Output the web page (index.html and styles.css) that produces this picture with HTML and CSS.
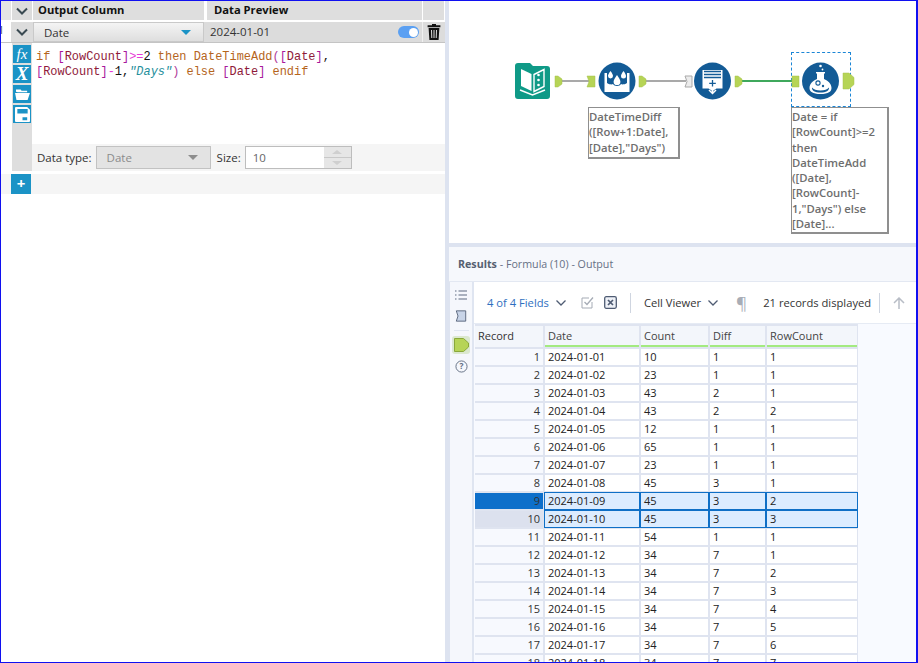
FILE: index.html
```html
<!DOCTYPE html>
<html lang="en">
<head>
<meta charset="utf-8">
<title>Formula tool results</title>
<link rel="stylesheet" href="styles.css">
</head>
<body>
<div class="window">
  <section class="config">
    <div class="head-row">
      <div class="stub"></div>
      <div class="chev-cell"><svg class="chev" viewBox="0 0 12 8"><path d="M1 1.500l5 5 5-5"/></svg></div>
      <div class="head-cell col-output">Output Column</div>
      <div class="head-cell col-preview">Data Preview</div>
      <div class="head-end"></div>
    </div>
    <div class="field-row">
      <div class="stub stub-num"><span>1</span></div>
      <div class="chev-cell"><svg class="chev" viewBox="0 0 12 8"><path d="M1 1.500l5 5 5-5"/></svg></div>
      <div class="select-main"><span>Date</span><i class="caret"></i></div>
      <div class="preview-val">2024-01-01</div>
      <div class="toggle"><i></i></div>
      <div class="trash">
        <svg viewBox="0 0 14 16" width="14" height="16"><path class="trash-fill" d="M5 0h4v1.200h4.400v2H.6v-2H5zM1.600 4h10.800l-.8 12H2.400z"/><path class="trash-line" d="M4.500 6l.3 8M7 6v8M9.500 6l-.3 8"/></svg>
      </div>
    </div>
    <div class="editor">
      <div class="tools">
        <div class="tool fx">fx</div>
        <div class="tool var">X</div>
        <div class="tool"><svg viewBox="0 0 16 14" width="15" height="13"><path fill="#fff" d="M1 4V1.500h5l1 1.500h6v1.500H3zM0 5.500h16L13.500 13H1.500z"/></svg></div>
        <div class="tool"><svg viewBox="0 0 16 16" width="15" height="15"><path fill="#fff" fill-rule="evenodd" d="M1 0h12l3 3v12a1 1 0 0 1-1 1H1a1 1 0 0 1-1-1V1a1 1 0 0 1 1-1zM2.500 2v5h11V2zM8 11v3h5v-3z"/></svg></div>
      </div>
      <div class="editor-main">
        <pre class="code"><span class="k">if</span> <span class="b">[</span><span class="f">RowCount</span><span class="b">]</span><span class="o">&gt;=</span><span class="n">2</span> <span class="k">then</span> <span class="k">DateTimeAdd</span><span class="p">(</span><span class="b">[</span><span class="f">Date</span><span class="b">]</span><span class="n">,</span>
<span class="b">[</span><span class="f">RowCount</span><span class="b">]</span><span class="o">-</span><span class="n">1,</span><span class="s">"Days"</span><span class="p">)</span> <span class="k">else</span> <span class="b">[</span><span class="f">Date</span><span class="b">]</span> <span class="k">endif</span></pre>
        <div class="type-bar">
          <span class="type-label">Data type:</span>
          <div class="type-select"><span>Date</span><i class="caret-gray"></i></div>
          <span class="size-label">Size:</span>
          <div class="size-input">
            <span>10</span>
            <div class="spin"><div class="spin-cell"><i class="up"></i></div><div class="spin-cell"><i class="down"></i></div></div>
          </div>
        </div>
      </div>
    </div>
    <div class="add-row"><div class="add-btn">+</div></div>
  </section>

  <div class="split-v"></div>

  <section class="right">
    <div class="canvas">
      <div class="select-box"></div>
      <svg class="wires" viewBox="0 0 468 243" width="468" height="243">
        <!-- reader -->
        <path fill="#0f9a87" d="M66 66a3 3 0 0 1 3-3h12l3 3h14a3 3 0 0 1 3 3v27a3 3 0 0 1-3 3H69a3 3 0 0 1-3-3z"/>
        <path fill="none" stroke="#fff" stroke-width="1.400" d="M71 90l12.500 5 12.500-5"/>
        <path fill="#fff" d="M72 69l10.500 5v17L72 86z"/>
        <path fill="none" stroke="#fff" stroke-width="1.400" d="M85 74.500l10-5v17l-10 5z"/>
        <g fill="#fff"><circle cx="89.500" cy="75" r="1.300"/><circle cx="89.500" cy="80" r="1.300"/><circle cx="89.500" cy="85" r="1.300"/></g>
        <!-- wires -->
        <path stroke="#a9a9a9" stroke-width="2" d="M112 81h28M197 81h40"/>
        <path stroke="#3fa85c" stroke-width="2" d="M293 81h52"/>
        <!-- anchors -->
        <path class="anchor" d="M106 76h3l4 3v5l-4 3h-3z"/>
        <path class="anchor" d="M138 76h8v11h-8l2-5.500z"/>
        <path class="anchor" d="M190 76h3l4 3v5l-4 3h-3z"/>
        <path class="anchor-off" d="M236 76h7v11h-7l2-5.500z"/>
        <path class="anchor" d="M286 76h3l4 3v5l-4 3h-3z"/>
        <path class="anchor" d="M343 76h7v11h-7z"/>
        <path class="anchor" d="M394 73h6l5 4.500v7l-5 4.500h-6z"/>
        <!-- multi-row formula tool -->
        <circle class="disc" cx="168" cy="81" r="18.500"/>
        <path fill="#fff" d="M155.500 73h2.500v10c3 2 5.500 1.500 6 1 1 2.500 7 2.500 8 0 .5.500 3 1 6-1V73h2.500v19h-25z"/>
        <path fill="#fff" d="M161.500 71c1.700 2.400 2.500 3.700 2.500 4.900a2.500 2.500 0 0 1-5 0c0-1.200.8-2.500 2.500-4.900zM174.500 71c1.700 2.400 2.500 3.700 2.500 4.900a2.500 2.500 0 0 1-5 0c0-1.200.8-2.500 2.500-4.900zM168 75c2.300 3.200 3.400 5 3.400 6.700a3.400 3.400 0 0 1-6.800 0c0-1.700 1.100-3.500 3.400-6.700z"/>
        <!-- sort / record tool -->
        <circle class="disc" cx="263.500" cy="81" r="18.500"/>
        <path fill="#fff" d="M253.500 70h20v18.500h-6l-4 2.500-4-2.500h-6z"/>
        <path stroke="#135b96" stroke-width="1.300" d="M255 71.500h17M255 74.500h17M255 77.500h17M263.500 80v6.500M260.200 83.300h6.600"/>
        <path fill="none" stroke="#fff" stroke-width="1.500" d="M263.500 88v5M260 90l3.500 3.500L267 90"/>
        <!-- formula tool -->
        <circle class="disc" cx="371.500" cy="81" r="18.500"/>
        <path fill="#fff" d="M367 72h9v1.500h-1V79c4 1.500 7.500 5 7.500 9 0 3.500-3 6-11 6s-11-2.500-11-6c0-4 3.500-7.500 7.500-9v-5.500h-1z"/>
        <path fill="#135b96" d="M363 87.500c1.500 2 4.500 3 8.500 3s7-1 8.500-3c.5 3-3 5-8.500 5s-9-2-8.500-5z"/>
        <circle cx="369" cy="83" r="2.100" fill="none" stroke="#135b96" stroke-width="1.100"/>
        <circle cx="374" cy="86" r="1.200" fill="#135b96"/>
        <circle cx="371.500" cy="66" r="1.300" fill="#fff"/><circle cx="373.500" cy="69.500" r=".9" fill="#fff"/>
      </svg>
      <div class="note note-a">DateTimeDiff ([Row+1:Date], [Date],"Days")</div>
      <div class="note note-b">Date = if<br>[RowCount]&gt;=2<br>then<br>DateTimeAdd<br>([Date],<br>[RowCount]-<br>1,"Days") else<br>[Date]...</div>
    </div>

    <div class="split-h"></div>

    <div class="results-title"><b>Results</b> - Formula (10) - Output</div>

    <div class="results-body">
      <div class="rail">
        <svg viewBox="0 0 14 12" width="14" height="12"><path stroke="#5f6b80" stroke-width="1.200" stroke-dasharray="1.500 1" d="M1 2h2M1 6h2M1 10h2"/><path stroke="#5f6b80" stroke-width="1.200" d="M4.500 2H13M4.500 6H13M4.500 10H13"/></svg>
        <svg class="rail-book" viewBox="0 0 12 14" width="12" height="12"><path fill="#c8d4e8" stroke="#4f5c73" d="M.5 1h11v12H.5l2-6z"/></svg>
        <div class="rail-sep"></div>
        <div class="rail-active"><svg viewBox="0 0 15 14" width="15" height="14"><path fill="#b6d456" stroke="#8aa83a" d="M.5.500h9l5 4.500v4l-5 4.500h-9z"/></svg></div>
        <svg viewBox="0 0 14 14" width="13" height="13"><circle cx="7" cy="7" r="6" fill="none" stroke="#5f6b80"/><text x="7" y="10.200" text-anchor="middle" class="q">?</text></svg>
      </div>
      <div class="results-main">
        <div class="toolbar">
          <span class="fields">4 of 4 Fields</span>
          <svg class="tb-chev" viewBox="0 0 10 6" width="10" height="6"><path d="M.5.500L5 5 9.500.500"/></svg>
          <svg class="tb-check" viewBox="0 0 13 13" width="13" height="13"><path fill="none" stroke="#a5abb5" d="M11 6v6H1V2h7"/><path fill="none" stroke="#a5abb5" stroke-width="1.300" d="M3.500 6l2.500 2.500 6-7"/></svg>
          <svg class="tb-x" viewBox="0 0 13 13" width="13" height="13"><rect x=".7" y=".7" width="11.600" height="11.600" rx="1.500" fill="#eef1f7" stroke="#4f5c73" stroke-width="1.300"/><path stroke="#4f5c73" stroke-width="1.700" d="M4 4l5 5M9 4l-5 5"/></svg>
          <i class="tb-sep sep-1"></i>
          <span class="viewer">Cell Viewer</span>
          <svg class="tb-chev" viewBox="0 0 10 6" width="10" height="6"><path d="M.5.500L5 5 9.500.500"/></svg>
          <span class="pilcrow">¶</span>
          <span class="count">21 records displayed</span>
          <i class="tb-sep sep-2"></i>
          <svg class="tb-up" viewBox="0 0 12 12" width="12" height="12"><path fill="none" stroke="#b8bdc6" stroke-width="1.500" d="M6 12V1M1 6l5-5 5 5"/></svg>
        </div>
        <div class="grid" id="grid">
          <div class="th">Record</div><div class="th th-g">Date</div><div class="th th-g">Count</div><div class="th th-g">Diff</div><div class="th th-g">RowCount</div>
          <div class="rec">1</div><div class="td">2024-01-01</div><div class="td">10</div><div class="td">1</div><div class="td">1</div>
          <div class="rec">2</div><div class="td">2024-01-02</div><div class="td">23</div><div class="td">1</div><div class="td">1</div>
          <div class="rec">3</div><div class="td">2024-01-03</div><div class="td">43</div><div class="td">2</div><div class="td">1</div>
          <div class="rec">4</div><div class="td">2024-01-04</div><div class="td">43</div><div class="td">2</div><div class="td">2</div>
          <div class="rec">5</div><div class="td">2024-01-05</div><div class="td">12</div><div class="td">1</div><div class="td">1</div>
          <div class="rec">6</div><div class="td">2024-01-06</div><div class="td">65</div><div class="td">1</div><div class="td">1</div>
          <div class="rec">7</div><div class="td">2024-01-07</div><div class="td">23</div><div class="td">1</div><div class="td">1</div>
          <div class="rec">8</div><div class="td">2024-01-08</div><div class="td">45</div><div class="td">3</div><div class="td">1</div>
          <div class="rec rec-on">9</div><div class="td sel">2024-01-09</div><div class="td sel">45</div><div class="td sel">3</div><div class="td sel">2</div>
          <div class="rec rec-semi">10</div><div class="td sel">2024-01-10</div><div class="td sel">45</div><div class="td sel">3</div><div class="td sel">3</div>
          <div class="rec">11</div><div class="td">2024-01-11</div><div class="td">54</div><div class="td">1</div><div class="td">1</div>
          <div class="rec">12</div><div class="td">2024-01-12</div><div class="td">34</div><div class="td">7</div><div class="td">1</div>
          <div class="rec">13</div><div class="td">2024-01-13</div><div class="td">34</div><div class="td">7</div><div class="td">2</div>
          <div class="rec">14</div><div class="td">2024-01-14</div><div class="td">34</div><div class="td">7</div><div class="td">3</div>
          <div class="rec">15</div><div class="td">2024-01-15</div><div class="td">34</div><div class="td">7</div><div class="td">4</div>
          <div class="rec">16</div><div class="td">2024-01-16</div><div class="td">34</div><div class="td">7</div><div class="td">5</div>
          <div class="rec">17</div><div class="td">2024-01-17</div><div class="td">34</div><div class="td">7</div><div class="td">6</div>
          <div class="rec">18</div><div class="td">2024-01-18</div><div class="td">34</div><div class="td">7</div><div class="td">7</div>
        </div>
      </div>
    </div>
  </section>
</div>
</body>
</html>
```

FILE: styles.css
```css
* { box-sizing: border-box; }
html, body { margin: 0; height: 100%; overflow: hidden; }
body { font-family: "Open Sans", "Noto Sans", sans-serif; font-size: 11px; color: #222; background: #fff; }
.window { width: 918px; height: 663px; display: flex; border: 1px solid #1010f0; border-right-width: 2px; overflow: hidden; }

/* left config */
.config { width: 444px; flex: none; background: #fff; display: flex; flex-direction: column; }
.head-row { display: flex; height: 19px; margin-bottom: 2px; flex: none; }
.stub { width: 10px; background: #e4e4e4; flex: none; }
.stub-num { background: #fff; color: #555; font-size: 11px; line-height: 16px; overflow: hidden; }
.stub-num span { display: block; margin-left: -3px; }
.chev-cell { width: 20px; margin-left: 1px; flex: none; background: #dcdcdc; display: flex; align-items: center; justify-content: center; }
.chev { width: 12px; height: 8px; fill: none; stroke: #3a4a52; stroke-width: 2; }
.head-cell { background: #dedede; font-weight: 700; font-size: 11.200px; line-height: 18px; color: #111; flex: none; }
.col-output { width: 171px; margin-left: 1px; padding-left: 5px; }
.col-preview { width: 215px; margin-left: 3px; padding-left: 7px; }
.head-end { flex: 1; background: #dedede; margin-left: 1px; margin-right: 1px; }
.field-row { display: flex; height: 21px; background: #dcdcdc; border-bottom: 1px solid #c4c4c4; flex: none; }
.select-main { width: 171px; margin-left: 1px; flex: none; border: 1px solid #c9c9c9; background: linear-gradient(#f4f4f4, #dedede); display: flex; align-items: center; justify-content: space-between; padding: 0 12px 0 10px; font-size: 11.500px; color: #333; }
.caret { border: 5px solid transparent; border-top: 5px solid #1b93c6; border-bottom: 0; }
.preview-val { width: 195px; padding-left: 6px; line-height: 20px; font-size: 11.500px; color: #333; flex: none; }
.toggle { width: 21px; height: 12px; margin-top: 4px; background: #5ba0f2; border-radius: 6px; display: flex; justify-content: flex-end; padding: 1.500px; flex: none; margin-left: -1px; }
.toggle i { width: 9px; height: 9px; background: #fff; border-radius: 50%; }
.trash { width: 22px; flex: none; margin-left: 3px; border-left: 1px solid #f0f0f0; display: flex; justify-content: center; align-items: center; }
.trash-fill { fill: #111; }
.trash-line { stroke: #ddd; stroke-width: 1; fill: none; }

.editor { height: 128px; display: flex; flex: none; }
.tools { width: 20px; margin-left: 11px; background: #dedede; flex: none; padding-top: 2px; display: flex; flex-direction: column; align-items: center; gap: 2px; }
.tool { width: 18px; height: 18px; background: #1b93c6; color: #fff; display: flex; align-items: center; justify-content: center; flex: none; }
.tool.fx { font-family: "Liberation Serif", serif; font-style: italic; font-size: 15px; }
.tool.var { font-family: "Liberation Serif", serif; font-style: italic; font-size: 19px; font-weight: 700; }
.editor-main { flex: 1; display: flex; flex-direction: column; }
.code { flex: 1; margin: 0; padding: 7px 0 0 4px; font-family: "Liberation Mono", "DejaVu Sans Mono", monospace; font-size: 11.950px; line-height: 15px; color: #222; }
.k { color: #b5651d; }
.b { color: #a8189c; }
.f { color: #8f1a3a; }
.o { color: #e83ad6; }
.n { color: #111; }
.p { color: #b03a9a; }
.s { color: #1f8f9c; font-style: italic; }
.type-bar { height: 27px; background: #f5f5f5; display: flex; align-items: flex-start; padding: 2px 0 0 5px; flex: none; }
.type-label { font-size: 11.500px; line-height: 24px; color: #333; }
.type-select { width: 115px; height: 23px; margin-left: 4px; background: #e3e3e3; border: 1px solid #c2c2c2; display: flex; align-items: center; justify-content: space-between; padding: 0 12px 0 10px; color: #8b8b8b; font-size: 11.500px; }
.caret-gray { border: 5px solid transparent; border-top: 5px solid #8d8d8d; border-bottom: 0; }
.size-label { margin-left: 6px; font-size: 11.500px; line-height: 24px; color: #333; }
.size-input { width: 107px; height: 23px; margin-left: 4px; background: #fff; border: 1px solid #bdbdbd; display: flex; justify-content: space-between; padding-left: 7px; line-height: 22px; font-size: 11.500px; color: #666; }
.spin { width: 27px; background: #e6e6e6; display: flex; flex-direction: column; }
.spin-cell { flex: 1; display: flex; align-items: center; justify-content: center; }
.spin-cell:first-child { border-bottom: 1px solid #c8c8c8; }
.up { border: 5px solid transparent; border-bottom: 4px solid #cfcfcf; border-top: 0; }
.down { border: 5px solid transparent; border-top: 4px solid #cfcfcf; border-bottom: 0; }
.add-row { margin-top: 3px; height: 20px; background: #f5f5f5; padding-left: 10px; flex: none; }
.add-btn { width: 20px; height: 20px; background: #1b93c6; color: #fff; font-weight: 700; font-size: 15px; line-height: 19px; text-align: center; }

.split-v { width: 4px; background: #dde3f0; flex: none; }

/* right */
.right { flex: 1; min-width: 0; display: flex; flex-direction: column; }
.canvas { position: relative; height: 242px; background: #fff; flex: none; }
.wires { position: absolute; left: 0; top: -1px; }
.anchor { fill: #b6d456; stroke: #a4c04c; stroke-width: .5; }
.anchor-off { fill: #ececec; stroke: #a9a9a9; }
.disc { fill: #135b96; }
.select-box { position: absolute; left: 342px; top: 51px; width: 60px; height: 55px; border: 1px dashed #1b86d6; }
.note { position: absolute; background: #fff; border: 1px solid #8f8f8f; border-right-width: 2px; border-bottom-width: 2px; color: #6e6e6e; font-size: 11.300px; font-weight: 600; line-height: 15.300px; padding: 1px 0 0 0; }
.note-a { left: 139px; top: 106px; width: 92px; height: 52px; }
.note-b { left: 342px; top: 106px; width: 98px; height: 127px; }
.split-h { height: 4px; background: #dde3f0; flex: none; }
.results-title { height: 35px; background: #f6f8fc; color: #667085; font-size: 10.700px; line-height: 35px; padding-left: 9px; flex: none; border-bottom: 1px solid #e3e8f2; }
.results-title b { font-weight: 700; color: #556070; }
.results-body { flex: 1; min-height: 0; display: flex; background: #f8faff; }
.rail { width: 25px; background: #f5f7fc; border-right: 2px solid #dfe5f1; border-left: 1px solid #dde3f0; display: flex; flex-direction: column; align-items: center; padding-top: 7px; flex: none; }
.rail-book { margin-top: 9px; }
.rail-sep { width: 15px; height: 1px; background: #dfe5f1; margin: 8px 0 5px; }
.rail-active { width: 18px; height: 18px; background: #dbe8cf; border-radius: 3px; display: flex; align-items: center; justify-content: center; margin-bottom: 6px; }
.q { font-size: 9px; fill: #5f6b80; font-weight: 700; }
.results-main { flex: 1; min-width: 0; display: flex; flex-direction: column; }
.toolbar { height: 42px; background: #fff; border-bottom: 1px solid #e6ebf4; display: flex; align-items: center; padding-left: 13px; font-size: 11.200px; color: #333; flex: none; }
.fields { color: #2f6fc0; }
.tb-chev { margin-left: 7px; fill: none; stroke: #4f5c73; stroke-width: 1.300; }
.tb-check { margin-left: 15px; }
.tb-x { margin-left: 10px; }
.tb-sep { width: 1px; height: 20px; background: #cfd5e0; display: block; }
.sep-1 { margin: 0 13px 0 13px; }
.pilcrow { margin-left: 18px; color: #a8adb6; font-size: 17px; line-height: 17px; }
.count { margin-left: 16px; }
.sep-2 { margin: 0 13px 0 8px; }
.grid { display: grid; grid-template-columns: 68px 94px 67px 55px 90px; grid-template-rows: 21px; grid-auto-rows: 16px; gap: 2px; padding: 2px 0 0 0; margin-left: 1px; width: 383px; height: 340px; overflow: hidden; background: #dfe4f0; align-content: start; }
.th { background: #f3f6fb; color: #444; line-height: 20px; padding-left: 3px; font-size: 11px; }
.th:first-child { color: #333; }
.th-g { border-bottom: 2px solid #a3ea80; }
.rec, .td { height: 16px; line-height: 15px; font-size: 11px; background: #fff; padding-left: 3px; color: #222; white-space: nowrap; }
.rec { background: #f7f9fe; text-align: right; padding: 0 3px 0 0; color: #333; }
.rec-on { background: #0d6fca; color: #333; }
.rec-semi { background: #dce1ee; }
.td.sel { background: #dcecff; outline: 1px solid #0f6fc6; position: relative; }
```
